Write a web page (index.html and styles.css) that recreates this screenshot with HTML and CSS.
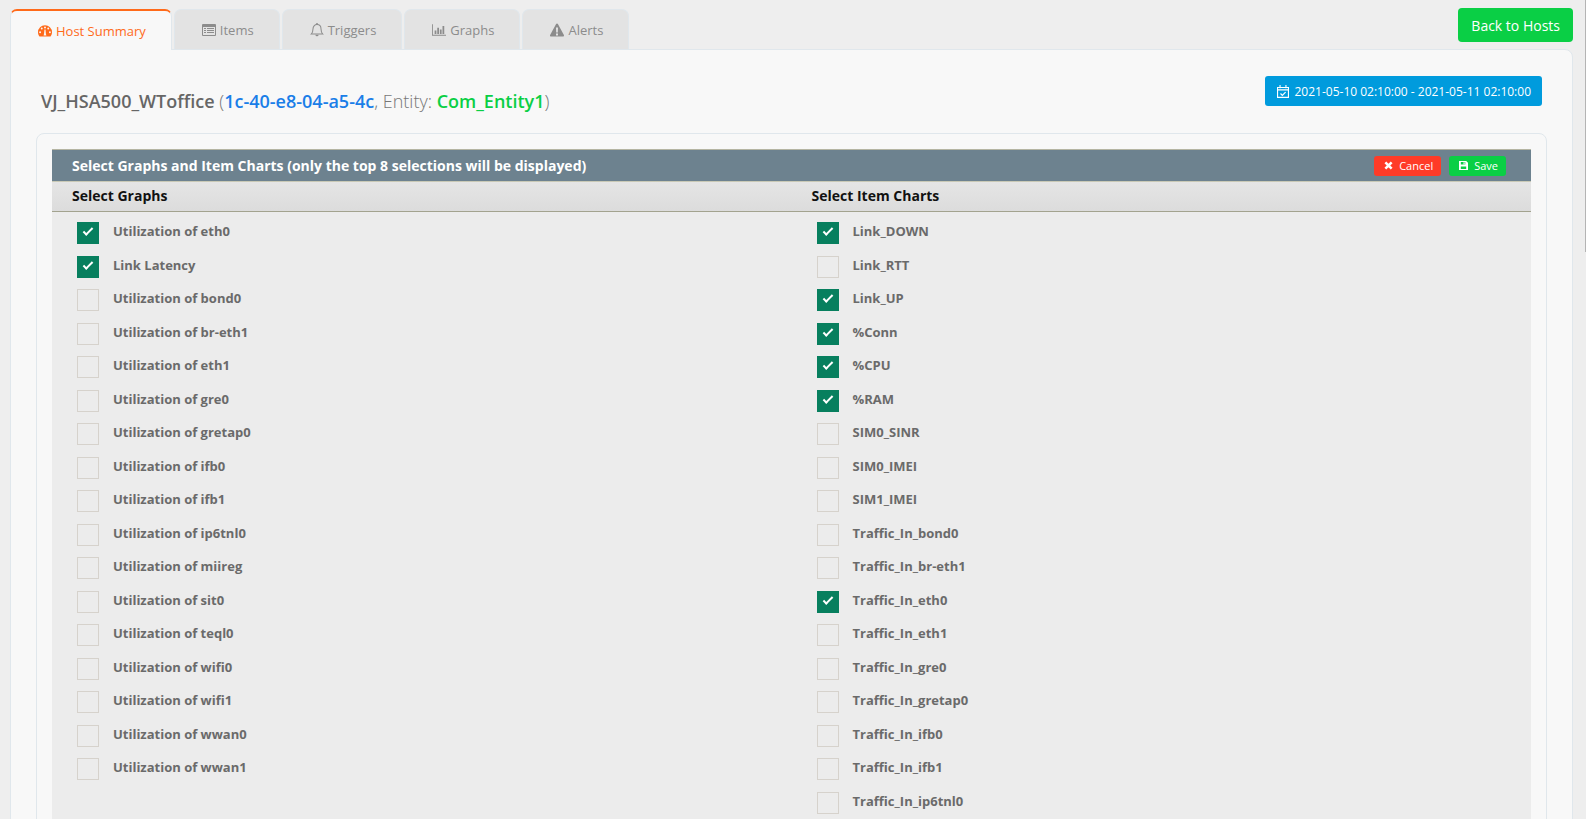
FILE: index.html
```html
<!DOCTYPE html>
<html lang="en">
<head>
    <meta charset="UTF-8">
    <title>Host Summary</title>
    <link rel="stylesheet" href="styles.css">
</head>
<body>
    <div class="scroll-thumb"></div>

    <div class="top-bar">
        <div class="tabs">
            <a class="tab active">
                <svg class="tab-icon" viewBox="0 0 16 14"><path fill="currentColor" fill-rule="evenodd" d="M8 .5a8 8 0 0 1 8 8c0 1.900-.6 3.500-1.700 4.700H1.700C.6 12 0 10.400 0 8.500a8 8 0 0 1 8-8zM2.400 7.300a1.100 1.100 0 1 0 0 2.200 1.100 1.100 0 0 0 0-2.200zM4.300 3.100a1.100 1.100 0 1 0 0 2.200 1.100 1.100 0 0 0 0-2.200zM8 1.800a1.100 1.100 0 1 0 0 2.200 1.100 1.100 0 0 0 0-2.200zM11.700 3.100a1.100 1.100 0 1 0 0 2.200 1.100 1.100 0 0 0 0-2.200zM13.600 7.300a1.100 1.100 0 1 0 0 2.200 1.100 1.100 0 0 0 0-2.200zM6.900 10.200l-.5 2h3.200l-.6-2-.4-4.900h-1.200z"/></svg>
                Host Summary
            </a>
            <a class="tab">
                <svg class="tab-icon" viewBox="0 0 14 12"><path fill="currentColor" fill-rule="evenodd" d="M1 0h12a1 1 0 0 1 1 1v10a1 1 0 0 1-1 1H1a1 1 0 0 1-1-1V1a1 1 0 0 1 1-1zM1 3v8h12V3zM2 4h2v1H2zM5 4h7v1H5zM2 6h2v1H2zM5 6h7v1H5zM2 8h2v1H2zM5 8h7v1H5z"/></svg>
                Items
            </a>
            <a class="tab">
                <svg class="tab-icon" viewBox="0 0 14 15"><path fill="none" stroke="currentColor" stroke-width="1.100" d="M.8 11.800c1.400-1.300 1.900-2.600 1.900-5.300C2.700 3.800 4.500 1.700 7 1.700s4.300 2.100 4.300 4.800c0 2.700.5 4 1.900 5.300z"/><path fill="currentColor" d="M6.200 0h1.600v2H6.200zM5.300 12.500h3.400a1.700 1.700 0 0 1-3.400 0z"/></svg>
                Triggers
            </a>
            <a class="tab">
                <svg class="tab-icon" viewBox="0 0 16 13"><path fill="currentColor" d="M0 0h1v12h15v1H0zM3 7h2v4H3zM6 4h2v7H6zM9 6h2v5H9zM12 2h2v9h-2z"/></svg>
                Graphs
            </a>
            <a class="tab">
                <svg class="tab-icon" viewBox="0 0 14 13"><path fill="currentColor" fill-rule="evenodd" d="M7 0c.4 0 .7.2.9.5l6 11c.3.7-.1 1.500-.9 1.500H1c-.8 0-1.200-.8-.9-1.500l6-11C6.300.2 6.600 0 7 0zM6 4l.2 5h1.600L8 4zM6 10v2h2v-2z"/></svg>
                Alerts
            </a>
        </div>
        <a class="back-button">Back to Hosts</a>
    </div>

    <div class="panel">
        <div class="panel-head">
            <h2 class="host-title"><b>VJ_HSA500_WToffice</b> (<b class="mac">1c-40-e8-04-a5-4c</b>, Entity: <b class="entity">Com_Entity1</b>)</h2>
            <a class="date-button">
                <svg class="date-icon" viewBox="0 0 13 14"><path fill="none" stroke="#fff" stroke-width="1.200" d="M.6 2.600h11.800v10.800H.6zM.6 5.200h11.800M3.300 0v3.500M9.700 0v3.500"/><path fill="none" stroke="#fff" stroke-width="1.300" d="M3.800 9.200l2 2 3.500-3.600"/></svg>
                2021-05-10 02:10:00 - 2021-05-11 02:10:00
            </a>
        </div>

        <div class="card">
            <div class="select-header">
                <span>Select Graphs and Item Charts (only the top 8 selections will be displayed)</span>
                <div class="header-buttons">
                    <a class="small-button cancel">
                        <svg class="small-icon" viewBox="0 0 10 10"><path fill="none" stroke="#fff" stroke-width="2.800" d="M1.500 1.500l7 7M8.500 1.500l-7 7"/></svg>
                        Cancel
                    </a>
                    <a class="small-button save">
                        <svg class="small-icon" viewBox="0 0 10 10"><path fill="#fff" fill-rule="evenodd" d="M0 0h8l2 2v8H0zM2 1v3h5V1zM5 1.500h1.300v2H5zM2 6v3h6V6z"/></svg>
                        Save
                    </a>
                </div>
            </div>

            <div class="columns sub-header">
                <div>Select Graphs</div>
                <div>Select Item Charts</div>
            </div>

            <div class="columns lists">
                <ul class="check-list">
                    <li class="checked"><i class="box"></i><span>Utilization of eth0</span></li>
                    <li class="checked"><i class="box"></i><span>Link Latency</span></li>
                    <li><i class="box"></i><span>Utilization of bond0</span></li>
                    <li><i class="box"></i><span>Utilization of br-eth1</span></li>
                    <li><i class="box"></i><span>Utilization of eth1</span></li>
                    <li><i class="box"></i><span>Utilization of gre0</span></li>
                    <li><i class="box"></i><span>Utilization of gretap0</span></li>
                    <li><i class="box"></i><span>Utilization of ifb0</span></li>
                    <li><i class="box"></i><span>Utilization of ifb1</span></li>
                    <li><i class="box"></i><span>Utilization of ip6tnl0</span></li>
                    <li><i class="box"></i><span>Utilization of miireg</span></li>
                    <li><i class="box"></i><span>Utilization of sit0</span></li>
                    <li><i class="box"></i><span>Utilization of teql0</span></li>
                    <li><i class="box"></i><span>Utilization of wifi0</span></li>
                    <li><i class="box"></i><span>Utilization of wifi1</span></li>
                    <li><i class="box"></i><span>Utilization of wwan0</span></li>
                    <li><i class="box"></i><span>Utilization of wwan1</span></li>
                </ul>
                <ul class="check-list">
                    <li class="checked"><i class="box"></i><span>Link_DOWN</span></li>
                    <li><i class="box"></i><span>Link_RTT</span></li>
                    <li class="checked"><i class="box"></i><span>Link_UP</span></li>
                    <li class="checked"><i class="box"></i><span>%Conn</span></li>
                    <li class="checked"><i class="box"></i><span>%CPU</span></li>
                    <li class="checked"><i class="box"></i><span>%RAM</span></li>
                    <li><i class="box"></i><span>SIM0_SINR</span></li>
                    <li><i class="box"></i><span>SIM0_IMEI</span></li>
                    <li><i class="box"></i><span>SIM1_IMEI</span></li>
                    <li><i class="box"></i><span>Traffic_In_bond0</span></li>
                    <li><i class="box"></i><span>Traffic_In_br-eth1</span></li>
                    <li class="checked"><i class="box"></i><span>Traffic_In_eth0</span></li>
                    <li><i class="box"></i><span>Traffic_In_eth1</span></li>
                    <li><i class="box"></i><span>Traffic_In_gre0</span></li>
                    <li><i class="box"></i><span>Traffic_In_gretap0</span></li>
                    <li><i class="box"></i><span>Traffic_In_ifb0</span></li>
                    <li><i class="box"></i><span>Traffic_In_ifb1</span></li>
                    <li><i class="box"></i><span>Traffic_In_ip6tnl0</span></li>
                </ul>
            </div>
        </div>
    </div>
</body>
</html>
```

FILE: styles.css
```css
html, body {
    height: 100%;
    overflow: hidden;
}
body {
    margin: 0;
    padding: 0 13px 0 10px;
    background-color: #eeeeee;
    color: #6a6a6a;
    font-family: "Open Sans", sans-serif;
    font-size: 13px;
}
a {
    text-decoration: none;
}
.scroll-thumb {
    position: fixed;
    top: 0;
    right: 0;
    width: 1px;
    height: 252px;
    background-color: #b4b4b4;
}
.top-bar {
    display: flex;
    justify-content: space-between;
    height: 49px;
}
.tabs {
    display: flex;
    gap: 2px;
    align-self: flex-end;
}
.tab {
    display: flex;
    align-items: center;
    gap: 4px;
    height: 40px;
    padding: 0 25px 0 27px;
    box-sizing: border-box;
    background-color: #e3e3e3;
    border: 1px solid #e0e7ec;
    border-bottom: none;
    border-radius: 7px 7px 0 0;
    color: #8c8c8c;
}
.tab.active {
    position: relative;
    height: 41px;
    margin-bottom: -1px;
    background-color: #f8f8f8;
    border-top: 2px solid #ff6a1a;
    color: #ff6a1a;
}
.tab-icon {
    width: 14px;
    height: 14px;
    flex: none;
}
.back-button {
    display: flex;
    align-items: center;
    height: 34px;
    margin-top: 8px;
    padding: 0 13px;
    background-color: #0acf45;
    border-radius: 4px;
    color: #ffffff;
    font-size: 14px;
}
.panel {
    min-height: 900px;
    padding: 26px 25px 0;
    background-color: #f8f8f8;
    border: 1px solid #e0e7ec;
    border-radius: 0 8px 0 0;
}
.panel-head {
    display: flex;
    justify-content: space-between;
    height: 57px;
    padding: 0 5px;
}
.host-title {
    margin: 11px 0 0;
    font-size: 18px;
    font-weight: 300;
    line-height: 28px;
    color: #777777;
}
.host-title b {
    font-weight: 600;
    color: #666666;
}
.host-title .mac {
    color: #1a7ee8;
}
.host-title .entity {
    color: #0acf45;
}
.date-button {
    display: flex;
    align-items: center;
    gap: 5px;
    height: 30px;
    padding: 0 11px 0 12px;
    background-color: #009bdd;
    border-radius: 3px;
    color: #ffffff;
    font-size: 12px;
}
.date-icon {
    width: 12px;
    height: 13px;
}
.card {
    padding: 15px 15px 0;
    background-color: #f8f8f8;
    border: 1px solid #e0e7ec;
    border-radius: 8px 8px 0 0;
}
.select-header {
    display: flex;
    justify-content: space-between;
    align-items: center;
    height: 31px;
    padding: 0 25px 0 20px;
    background-color: #6d828f;
    border-top: 1px solid #b5b5a3;
    color: #ffffff;
    font-size: 14px;
    font-weight: 700;
}
.header-buttons {
    display: flex;
    gap: 8px;
}
.small-button {
    display: flex;
    align-items: center;
    gap: 6px;
    height: 20px;
    padding: 0 8px 0 10px;
    border-radius: 3px;
    color: #ffffff;
    font-size: 11px;
    font-weight: 400;
}
.small-button.cancel {
    background-color: #ff3b28;
}
.small-button.save {
    background-color: #0acf45;
}
.small-icon {
    width: 9px;
    height: 9px;
}
.columns {
    display: grid;
    grid-template-columns: 1fr 1fr;
}
.sub-header {
    height: 29px;
    line-height: 27px;
    background: linear-gradient(#e5e5e5, #dcdcdc);
    border-top: 1px solid #c9c9b6;
    border-bottom: 1px solid #a3a38f;
    color: #111111;
    font-size: 14px;
    font-weight: 700;
}
.sub-header div {
    padding-left: 20px;
}
.lists {
    min-height: 700px;
    padding-top: 10px;
    background-color: #ececec;
}
.check-list {
    margin: 0;
    padding: 0 0 0 25px;
    list-style: none;
}
.check-list li {
    display: flex;
    align-items: flex-start;
    gap: 14px;
    height: 33.5px;
    font-weight: 700;
}
.check-list span {
    margin-top: -1px;
    line-height: 20px;
}
.box {
    position: relative;
    width: 22px;
    height: 22px;
    box-sizing: border-box;
    border: 1px solid #d6d2cc;
}
.checked .box {
    background-color: #077f5e;
    border-color: #077f5e;
}
.checked .box:after {
    content: "";
    position: absolute;
    left: 5px;
    top: 5px;
    width: 8px;
    height: 3px;
    border-left: 2px solid #ffffff;
    border-bottom: 2px solid #ffffff;
    transform: rotate(-45deg);
}
```
